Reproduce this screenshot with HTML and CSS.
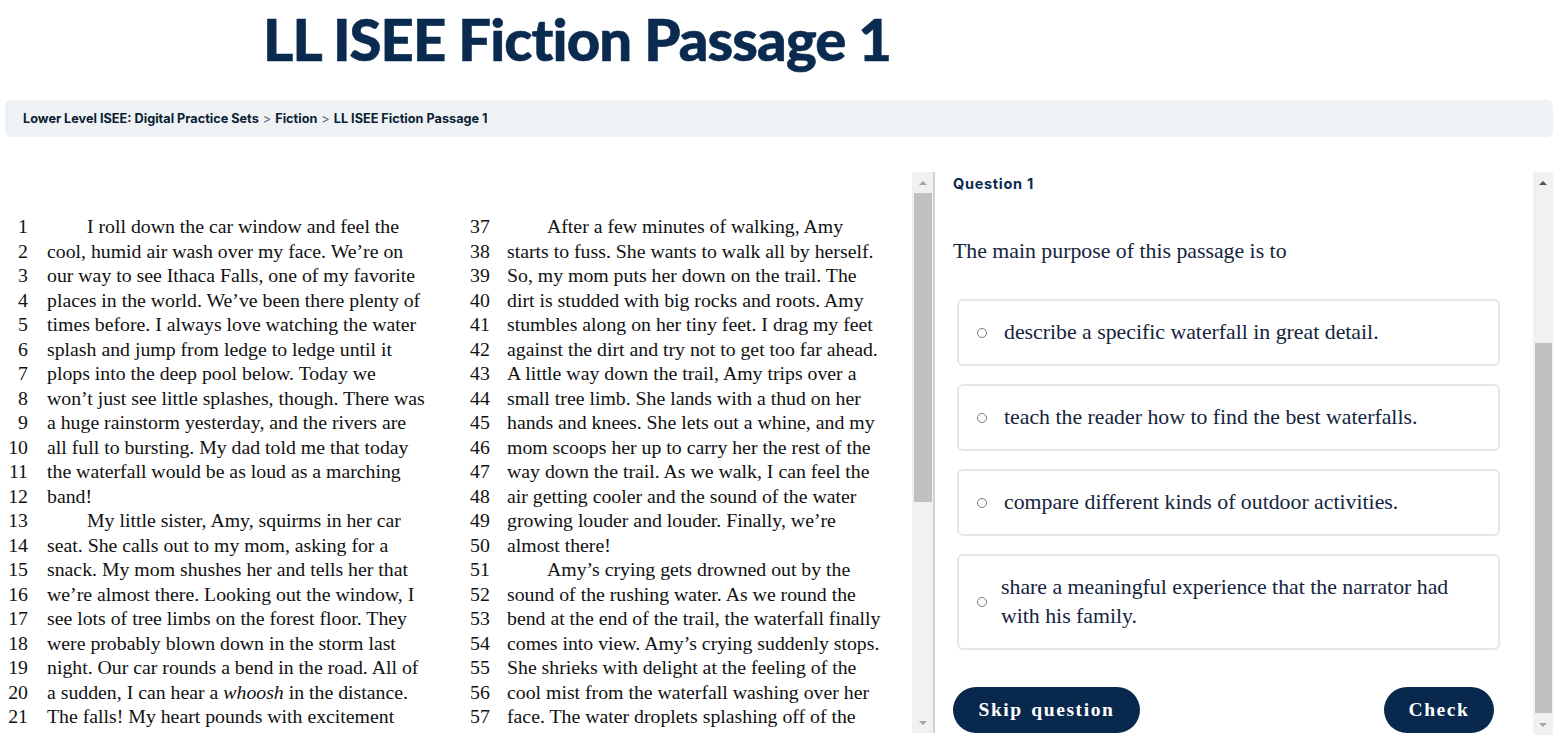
FILE: index.html
```html
<!DOCTYPE html>
<html lang="en">
<head>
<meta charset="utf-8">
<title>LL ISEE Fiction Passage 1</title>
<link rel="stylesheet" href="styles.css">
</head>
<body>
<header class="header">
  <h1 class="title">LL ISEE Fiction Passage 1</h1>
</header>
<nav class="crumbs">
  <a class="crumb">Lower Level ISEE: Digital Practice Sets</a><span class="sep">&gt;</span><a class="crumb">Fiction</a><span class="sep">&gt;</span><span class="crumb">LL ISEE Fiction Passage 1</span>
</nav>
<main class="main">
  <section class="passage-wrap">
    <div class="passage">
      <div class="col col-a">
        <span class="n">1</span><span class="t ind">I roll down the car window and feel the</span>
        <span class="n">2</span><span class="t">cool, humid air wash over my face. We’re on</span>
        <span class="n">3</span><span class="t">our way to see Ithaca Falls, one of my favorite</span>
        <span class="n">4</span><span class="t">places in the world. We’ve been there plenty of</span>
        <span class="n">5</span><span class="t">times before. I always love watching the water</span>
        <span class="n">6</span><span class="t">splash and jump from ledge to ledge until it</span>
        <span class="n">7</span><span class="t">plops into the deep pool below. Today we</span>
        <span class="n">8</span><span class="t">won’t just see little splashes, though. There was</span>
        <span class="n">9</span><span class="t">a huge rainstorm yesterday, and the rivers are</span>
        <span class="n">10</span><span class="t">all full to bursting. My dad told me that today</span>
        <span class="n">11</span><span class="t">the waterfall would be as loud as a marching</span>
        <span class="n">12</span><span class="t">band!</span>
        <span class="n">13</span><span class="t ind">My little sister, Amy, squirms in her car</span>
        <span class="n">14</span><span class="t">seat. She calls out to my mom, asking for a</span>
        <span class="n">15</span><span class="t">snack. My mom shushes her and tells her that</span>
        <span class="n">16</span><span class="t">we’re almost there. Looking out the window, I</span>
        <span class="n">17</span><span class="t">see lots of tree limbs on the forest floor. They</span>
        <span class="n">18</span><span class="t">were probably blown down in the storm last</span>
        <span class="n">19</span><span class="t">night. Our car rounds a bend in the road. All of</span>
        <span class="n">20</span><span class="t">a sudden, I can hear a <i>whoosh</i> in the distance.</span>
        <span class="n">21</span><span class="t">The falls! My heart pounds with excitement</span>
        <span class="n">22</span><span class="t">while my sister claps her hands. We finally</span>
      </div>
      <div class="col col-b">
        <span class="n">37</span><span class="t ind">After a few minutes of walking, Amy</span>
        <span class="n">38</span><span class="t">starts to fuss. She wants to walk all by herself.</span>
        <span class="n">39</span><span class="t">So, my mom puts her down on the trail. The</span>
        <span class="n">40</span><span class="t">dirt is studded with big rocks and roots. Amy</span>
        <span class="n">41</span><span class="t">stumbles along on her tiny feet. I drag my feet</span>
        <span class="n">42</span><span class="t">against the dirt and try not to get too far ahead.</span>
        <span class="n">43</span><span class="t">A little way down the trail, Amy trips over a</span>
        <span class="n">44</span><span class="t">small tree limb. She lands with a thud on her</span>
        <span class="n">45</span><span class="t">hands and knees. She lets out a whine, and my</span>
        <span class="n">46</span><span class="t">mom scoops her up to carry her the rest of the</span>
        <span class="n">47</span><span class="t">way down the trail. As we walk, I can feel the</span>
        <span class="n">48</span><span class="t">air getting cooler and the sound of the water</span>
        <span class="n">49</span><span class="t">growing louder and louder. Finally, we’re</span>
        <span class="n">50</span><span class="t">almost there!</span>
        <span class="n">51</span><span class="t ind">Amy’s crying gets drowned out by the</span>
        <span class="n">52</span><span class="t">sound of the rushing water. As we round the</span>
        <span class="n">53</span><span class="t">bend at the end of the trail, the waterfall finally</span>
        <span class="n">54</span><span class="t">comes into view. Amy’s crying suddenly stops.</span>
        <span class="n">55</span><span class="t">She shrieks with delight at the feeling of the</span>
        <span class="n">56</span><span class="t">cool mist from the waterfall washing over her</span>
        <span class="n">57</span><span class="t">face. The water droplets splashing off of the</span>
        <span class="n">58</span><span class="t">rocks land in the pool with a big splash.</span>
      </div>
    </div>
    <div class="sbar sbar-left">
      <div class="sb-btn"><span class="arr up"></span></div>
      <div class="sb-track"><div class="sb-thumb thumb-left"></div></div>
      <div class="sb-btn"><span class="arr down"></span></div>
    </div>
  </section>
  <section class="question-wrap">
    <div class="question">
      <div class="q-label">Question 1</div>
      <p class="q-text">The main purpose of this passage is to</p>
      <ul class="options">
        <li class="opt"><span class="radio"></span><span class="opt-text">describe a specific waterfall in great detail.</span></li>
        <li class="opt"><span class="radio"></span><span class="opt-text">teach the reader how to find the best waterfalls.</span></li>
        <li class="opt"><span class="radio"></span><span class="opt-text">compare different kinds of outdoor activities.</span></li>
        <li class="opt opt-wide"><span class="radio"></span><span class="opt-text">share a meaningful experience that the narrator had with his family.</span></li>
      </ul>
      <div class="actions">
        <button class="btn btn-skip">Skip question</button>
        <button class="btn btn-check">Check</button>
      </div>
    </div>
    <div class="sbar sbar-right">
      <div class="sb-btn"><span class="arr up dark"></span></div>
      <div class="sb-track"><div class="sb-thumb thumb-right"></div></div>
      <div class="sb-btn"><span class="arr down"></span></div>
    </div>
  </section>
</main>
</body>
</html>
```

FILE: styles.css
```css
html, body {
  margin: 0;
  padding: 0;
}
body {
  width: 1560px;
  height: 753px;
  overflow: hidden;
  background: #ffffff;
  font-family: "Lato", "Inter", sans-serif;
  color: #0b2a4f;
}

/* Header */
.header {
  height: 100px;
  box-sizing: border-box;
  padding: 10px 0 0 263px;
}
.title {
  margin: 0;
  font-family: "Lato", sans-serif;
  font-weight: 900;
  font-size: 58px;
  line-height: 1;
  color: #0b2a4f;
  letter-spacing: -0.9px;
  font-variant-ligatures: none;
  -webkit-text-stroke: 0.6px #0b2a4f;
}

/* Breadcrumbs */
.crumbs {
  margin: 0 7px 0 5px;
  height: 37px;
  box-sizing: border-box;
  background: #eff2f5;
  border-radius: 6px;
  padding-left: 18px;
  display: flex;
  align-items: center;
  font-family: "Inter", sans-serif;
  font-size: 12.7px;
  font-weight: 700;
  color: #0b1d33;
}
.crumb {
  color: #0b1d33;
}
.sep {
  font-weight: 400;
  color: #555e6b;
  margin: 0 4px;
}

/* Main */
.main {
  margin-top: 35px;
  height: 561px;
  display: flex;
}

.passage-wrap {
  width: 935px;
  flex: none;
  display: flex;
  border-right: 2px solid #d2d2d2;
  box-sizing: border-box;
}
.passage {
  width: 912px;
  flex: none;
  overflow: hidden;
  box-sizing: border-box;
  padding-top: 42px;
  display: flex;
  font-family: "Liberation Serif", "Times New Roman", serif;
  font-size: 19.8px;
  line-height: 24.5px;
  color: #111;
}
.col {
  display: grid;
  grid-template-columns: 47px auto;
  align-content: start;
  flex: none;
}
.col-a {
  width: 460px;
}
.col-b {
  width: 452px;
}
.n {
  text-align: right;
  padding-right: 19px;
}
.col-b .n {
  text-align: left;
  padding-right: 0;
  padding-left: 10px;
}
.t {
  white-space: nowrap;
}
.ind {
  padding-left: 40px;
}

/* Fake scrollbars */
.sbar {
  background: #f1f1f1;
  display: flex;
  flex-direction: column;
  flex: none;
}
.sbar-left {
  width: 21px;
}
.sbar-right {
  width: 20px;
  margin-right: 7px;
  height: 563px;
}
.sb-btn {
  height: 21px;
  display: flex;
  align-items: center;
  justify-content: center;
}
.sb-track {
  flex: 1;
}
.sb-thumb {
  background: #c1c1c1;
  margin: 0 1px 0 2px;
}
.thumb-left {
  height: 309px;
}
.thumb-right {
  margin-top: 150px;
  height: 370px;
}
.arr {
  width: 0;
  height: 0;
  border-left: 4px solid transparent;
  border-right: 4px solid transparent;
}
.arr.up {
  border-bottom: 4px solid #a3a3a3;
}
.arr.up.dark {
  border-bottom-color: #505050;
}
.arr.down {
  border-top: 4px solid #a3a3a3;
}

/* Question panel */
.question-wrap {
  flex: 1;
  display: flex;
}
.question {
  flex: 1;
  box-sizing: border-box;
  padding: 2px 0 0 18px;
}
.q-label {
  font-family: "Inter", sans-serif;
  font-weight: 700;
  font-size: 14.5px;
  letter-spacing: 0.7px;
  line-height: 20px;
  color: #0b2a4f;
}
.q-text {
  margin: 43px 0 0;
  font-family: "Liberation Serif", serif;
  font-size: 21.8px;
  line-height: 29px;
  color: #14243c;
}
.options {
  list-style: none;
  margin: 33px 0 0 4px;
  padding: 0;
  width: 543px;
  display: flex;
  flex-direction: column;
  gap: 18px;
}
.opt {
  border: 2px solid #e3e7ec;
  border-radius: 6px;
  padding: 17px 16px 17px 18px;
  display: flex;
  align-items: center;
  gap: 17px;
}
.radio {
  flex: none;
  width: 8px;
  height: 8px;
  border: 1px solid #7b7b7b;
  border-radius: 50%;
}
.opt-text {
  font-family: "Liberation Serif", serif;
  font-size: 21.8px;
  line-height: 29px;
  color: #14243c;
}
.opt-wide .opt-text {
  margin-left: -3px;
}

.actions {
  margin-top: 37px;
  width: 541px;
  display: flex;
  justify-content: space-between;
}
.btn {
  height: 46px;
  border: none;
  border-radius: 23px;
  background: #08284d;
  color: #ffffff;
  font-family: "Liberation Serif", serif;
  font-weight: 700;
  font-size: 19.5px;
  letter-spacing: 1.6px;
  word-spacing: 2px;
  padding: 0;
}
.btn-skip {
  width: 187px;
}
.btn-check {
  width: 110px;
}
```
